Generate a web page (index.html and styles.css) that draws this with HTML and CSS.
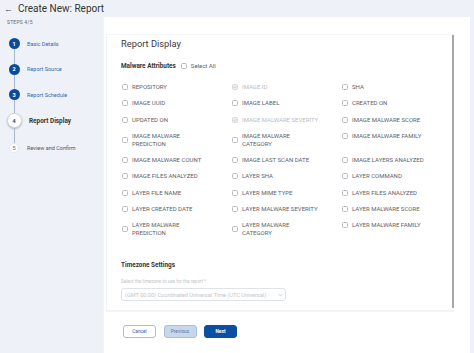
FILE: index.html
```html
<!DOCTYPE html>
<html lang="en">
<head>
    <meta charset="UTF-8">
    <meta name="viewport" content="width=device-width, initial-scale=1.0">
    <title>Create New: Report</title>
    <link rel="stylesheet" href="styles.css">
</head>
<body>
    <div class="app">
        <header class="topbar">
            <span class="back">&larr;</span>
            <span class="page-title">Create New: Report</span>
        </header>

        <div class="layout">
            <!-- Wizard steps -->
            <aside class="steps">
                <div class="steps-count">STEPS 4/5</div>
                <div class="step done">
                    <span class="dot-slot"><span class="dot">1</span></span>
                    <span class="step-label">Basic Details</span>
                </div>
                <div class="connector"></div>
                <div class="step done">
                    <span class="dot-slot"><span class="dot">2</span></span>
                    <span class="step-label">Report Source</span>
                </div>
                <div class="connector"></div>
                <div class="step done">
                    <span class="dot-slot"><span class="dot">3</span></span>
                    <span class="step-label">Report Schedule</span>
                </div>
                <div class="connector short"></div>
                <div class="step active">
                    <span class="dot-slot"><span class="dot">4</span></span>
                    <span class="step-label">Report Display</span>
                </div>
                <div class="connector"></div>
                <div class="step todo">
                    <span class="dot-slot"><span class="dot">5</span></span>
                    <span class="step-label">Review and Confirm</span>
                </div>
            </aside>

            <main class="panel">
                <section class="card">
                    <div class="card-body">
                        <h1 class="card-title">Report Display</h1>

                        <div class="group-head">
                            <span class="group-title">Malware Attributes</span>
                            <label class="check"><span class="box"></span><span class="check-text">Select All</span></label>
                        </div>

                        <div class="attr-grid" id="attr_grid"></div>

                        <h2 class="group-title tz-title">Timezone Settings</h2>
                        <div class="field-hint">Select the timezone to use for the report *</div>
                        <div class="select">
                            <span>(GMT 00:00) Coordinated Universal Time (UTC Universal)</span>
                            <svg class="chev" width="5" height="4" viewBox="0 0 5 4"><path d="M0.5 1 L2.5 3 L4.5 1" fill="none" stroke="#c4c7cc" stroke-width="0.8"/></svg>
                        </div>
                    </div>
                    <div class="scroll"><div class="thumb"></div></div>
                </section>

                <div class="actions">
                    <button class="btn btn-cancel">Cancel</button>
                    <button class="btn btn-prev">Previous</button>
                    <button class="btn btn-next">Next</button>
                </div>
            </main>
        </div>
    </div>

    <script>
        // attribute list, row by row (3 columns)
        const attrs = [
            ["REPOSITORY", ""], ["IMAGE ID", "locked"], ["SHA", ""],
            ["IMAGE UUID", ""], ["IMAGE LABEL", ""], ["CREATED ON", ""],
            ["UPDATED ON", ""], ["IMAGE MALWARE SEVERITY", "locked"], ["IMAGE MALWARE SCORE", ""],
            ["IMAGE MALWARE<br>PREDICTION", ""], ["IMAGE MALWARE<br>CATEGORY", ""], ["IMAGE MALWARE FAMILY", ""],
            ["IMAGE MALWARE COUNT", ""], ["IMAGE LAST SCAN DATE", ""], ["IMAGE LAYERS ANALYZED", ""],
            ["IMAGE FILES ANALYZED", ""], ["LAYER SHA", ""], ["LAYER COMMAND", ""],
            ["LAYER FILE NAME", ""], ["LAYER MIME TYPE", ""], ["LAYER FILES ANALYZED", ""],
            ["LAYER CREATED DATE", ""], ["LAYER MALWARE SEVERITY", ""], ["LAYER MALWARE SCORE", ""],
            ["LAYER MALWARE<br>PREDICTION", ""], ["LAYER MALWARE<br>CATEGORY", ""], ["LAYER MALWARE FAMILY", ""]
        ];

        const grid = document.getElementById("attr_grid");
        attrs.forEach(function (item) {
            const el = document.createElement("label");
            el.className = "check attr " + item[1];
            const tick = item[1] === "locked"
                ? '<svg width="4" height="4" viewBox="0 0 4 4"><path d="M0.6 2 L1.6 3 L3.4 1" fill="none" stroke="#c3c7cc" stroke-width="0.8"/></svg>'
                : '';
            el.innerHTML = `<span class="box">${tick}</span><span class="check-text">${item[0]}</span>`;
            grid.appendChild(el);
        });
    </script>
</body>
</html>
```

FILE: styles.css
```css
/* Global styles */
body {
    margin: 0;
    font-family: Roboto, 'Noto Sans', Arial, sans-serif;
    background-color: #eef2f8;
    color: #333;
}

.app {
    width: 474px;
    height: 353px;
    overflow: hidden;
}

/* Top bar */
.topbar {
    height: 17px;
    display: flex;
    align-items: center;
    padding-left: 4px;
    gap: 5px;
}

.back {
    font-size: 9px;
    color: #555;
}

.page-title {
    font-size: 10px;
    color: #333;
}

.layout {
    display: grid;
    grid-template-columns: 103px 367px;
    height: 336px;
}

/* Steps sidebar */
.steps {
    display: flex;
    flex-direction: column;
    padding-top: 2px;
}

.steps-count {
    font-size: 5px;
    color: #666;
    line-height: 7px;
    padding-left: 7px;
    letter-spacing: 0.2px;
    margin-bottom: 12px;
}

.step {
    display: flex;
    align-items: center;
    height: 11px;
}

.dot-slot {
    width: 16px;
    margin-left: 6px;
    display: flex;
    justify-content: center;
}

.dot {
    width: 11px;
    height: 11px;
    border-radius: 50%;
    background-color: #0f4a98;
    color: #fff;
    font-size: 5.5px;
    font-weight: bold;
    display: flex;
    align-items: center;
    justify-content: center;
}

.step-label {
    margin-left: 5px;
    font-size: 5.5px;
    color: #3466ad;
}

.connector {
    width: 1px;
    height: 14.5px;
    margin-left: 13.5px;
    background-color: #a9b6c8;
}

.connector.short {
    height: 13px;
}

.step.active {
    height: 15px;
}

.step.active .dot {
    width: 15px;
    height: 15px;
    background-color: #fff;
    color: #1c4f96;
    border: 1px solid #cfd5de;
    box-sizing: border-box;
    box-shadow: 0 1px 2px rgba(0, 0, 0, 0.25);
    font-size: 6px;
}

.step.active .step-label {
    margin-left: 7px;
    font-size: 6.4px;
    font-weight: bold;
    color: #333;
}

.step.todo {
    height: 10px;
}

.step.todo .dot {
    width: 10px;
    height: 10px;
    background-color: #fff;
    color: #666;
    border: 1px solid #e3e6eb;
    box-sizing: border-box;
    font-weight: normal;
}

.step.todo .step-label {
    color: #555;
}

/* Main panel */
.panel {
    background-color: #fff;
    padding: 17px 15px 0 2px;
    box-sizing: border-box;
    border-left: 1px solid #f3f5f8;
}

.card {
    display: flex;
    border: 1px solid #f3f4f6;
    border-right: none;
    box-shadow: 0 1px 1px rgba(0, 0, 0, 0.04);
}

.card-body {
    flex: 1;
    padding: 3px 0 9px 14px;
}

.scroll {
    width: 2px;
    padding-bottom: 2px;
    margin-right: 1px;
}

.thumb {
    height: 100%;
    background-color: #a7a7a7;
}

.card-title {
    margin: 0;
    font-size: 9.3px;
    font-weight: normal;
    line-height: 12px;
    color: #3a3a3a;
}

.group-head {
    display: flex;
    align-items: center;
    gap: 5px;
    margin-top: 12px;
    margin-bottom: 13px;
}

.group-title {
    margin: 0;
    font-size: 6.4px;
    line-height: 8px;
    font-weight: bold;
    color: #333;
}

/* Checkboxes */
.check {
    display: flex;
    align-items: center;
    gap: 4px;
}

.box {
    width: 6px;
    height: 6px;
    border: 1px solid #b8bdc5;
    border-radius: 1.5px;
    box-sizing: border-box;
    flex-shrink: 0;
    display: flex;
    align-items: center;
    justify-content: center;
}

.check-text {
    font-size: 6px;
    line-height: 8px;
    color: #5c6168;
}

.attr-grid {
    display: grid;
    grid-template-columns: repeat(3, 110px);
    row-gap: 8.3px;
    align-items: start;
    padding-left: 1px;
}

.attr.locked .box {
    border-color: #d7dade;
    background-color: #eceef1;
}

.attr.locked .check-text {
    color: #b9bdc3;
}

/* Timezone */
.tz-title {
    margin-top: 24px;
}

.field-hint {
    margin-top: 10px;
    font-size: 4.6px;
    line-height: 6px;
    color: #c2c5ca;
}

.select {
    margin-top: 3px;
    width: 165px;
    height: 13px;
    border: 1px solid #dfe2e6;
    border-radius: 3px;
    box-sizing: border-box;
    display: flex;
    align-items: center;
    justify-content: space-between;
    padding: 0 2px 0 3px;
    font-size: 5.6px;
    color: #c3c6cb;
    white-space: nowrap;
    overflow: hidden;
}

/* Buttons */
.actions {
    display: flex;
    gap: 7.5px;
    padding-left: 17px;
    margin-top: 14px;
}

.btn {
    width: 33px;
    height: 13px;
    border-radius: 3px;
    font-family: inherit;
    font-size: 4.8px;
    padding: 0;
    cursor: pointer;
}

.btn-cancel {
    background-color: #fff;
    border: 1px solid #a9bdd8;
    color: #35609f;
}

.btn-prev {
    background-color: #c8d7eb;
    border: 1px solid #aebfd8;
    color: #5a78a6;
}

.btn-next {
    background-color: #0c4ea3;
    border: 1px solid #0c4ea3;
    color: #fff;
    font-weight: bold;
}
```
